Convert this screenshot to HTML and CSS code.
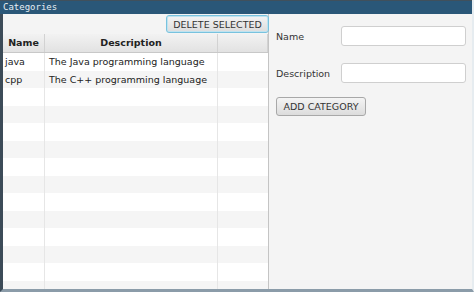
FILE: index.html
```html
<!DOCTYPE html>
<html>
<head>
<meta charset="utf-8">
<link rel="stylesheet" href="styles.css">
</head>
<body>
<div class="window">
  <div class="titlebar">Categories</div>
  <div class="content">
    <div class="left">
      <div class="toolbar">
        <button class="btn btn-focus">DELETE SELECTED</button>
      </div>
      <div class="table">
        <div class="row head">
          <div class="c c1">Name</div>
          <div class="c c2">Description</div>
          <div class="c c3"></div>
        </div>
        <div class="row"><div class="c c1">java</div><div class="c c2 l">The Java programming language</div><div class="c c3"></div></div>
        <div class="row odd"><div class="c c1">cpp</div><div class="c c2 l">The C++ programming language</div><div class="c c3"></div></div>
        <div class="row"><div class="c c1"></div><div class="c c2"></div><div class="c c3"></div></div>
        <div class="row odd"><div class="c c1"></div><div class="c c2"></div><div class="c c3"></div></div>
        <div class="row"><div class="c c1"></div><div class="c c2"></div><div class="c c3"></div></div>
        <div class="row odd"><div class="c c1"></div><div class="c c2"></div><div class="c c3"></div></div>
        <div class="row"><div class="c c1"></div><div class="c c2"></div><div class="c c3"></div></div>
        <div class="row odd"><div class="c c1"></div><div class="c c2"></div><div class="c c3"></div></div>
        <div class="row"><div class="c c1"></div><div class="c c2"></div><div class="c c3"></div></div>
        <div class="row odd"><div class="c c1"></div><div class="c c2"></div><div class="c c3"></div></div>
        <div class="row"><div class="c c1"></div><div class="c c2"></div><div class="c c3"></div></div>
        <div class="row odd"><div class="c c1"></div><div class="c c2"></div><div class="c c3"></div></div>
        <div class="row"><div class="c c1"></div><div class="c c2"></div><div class="c c3"></div></div>
        <div class="row odd"><div class="c c1"></div><div class="c c2"></div><div class="c c3"></div></div>
      </div>
    </div>
    <div class="right">
      <div class="field">
        <label class="lbl">Name</label>
        <div class="input"></div>
      </div>
      <div class="field">
        <label class="lbl">Description</label>
        <div class="input"></div>
      </div>
      <button class="btn add">ADD CATEGORY</button>
    </div>
  </div>
</div>
</body>
</html>
```
FILE: styles.css
```css
html, body {
  margin: 0;
  padding: 0;
  width: 474px;
  height: 292px;
  overflow: hidden;
  background: #f4f4f4;
}
.window {
  width: 474px;
  height: 292px;
  display: flex;
  flex-direction: column;
  box-sizing: border-box;
  border-left: 3px solid #3c4b58;
  border-right: 2px solid #e6ecf0;
  border-bottom: 3px solid #8b9ca9;
  font-family: "DejaVu Sans", sans-serif;
}
.titlebar {
  height: 14px;
  flex: none;
  box-sizing: border-box;
  background: #2a5778;
  border-top: 1px solid #40505c;
  color: #e8eef4;
  font-family: "DejaVu Sans Mono", monospace;
  font-size: 9px;
  line-height: 12px;
  margin-left: -3px;
  padding-left: 3px;
}
.content {
  flex: 1;
  display: flex;
  min-height: 0;
}
.left {
  width: 265px;
  flex: none;
  display: flex;
  flex-direction: column;
  border-right: 1px solid #c4c4c4;
  background: #f4f4f4;
}
.toolbar {
  height: 20px;
  flex: none;
  display: flex;
  justify-content: flex-end;
  align-items: flex-start;
  padding-top: 1px;
  box-sizing: border-box;
}
.btn {
  font-family: "DejaVu Sans", sans-serif;
  font-size: 9.5px;
  color: #333;
  background: linear-gradient(#f4f4f4, #dcdcdc);
  border: 1px solid #a8a8a8;
  border-radius: 3px;
  padding: 0 6px;
  height: 19px;
  line-height: 17px;
  margin: 0;
}
.btn-focus {
  width: 103px;
  height: 18px;
  border: 1px solid #78c2de;
  box-shadow: inset 0 0 0 1px #bfe3f0;
  margin-right: -1px;
  padding: 0;
}
.table {
  flex: 1;
  background: #fff;
  overflow: hidden;
}
.row {
  display: flex;
  height: 17.5px;
  background: #fff;
}
.row.odd {
  background: #f5f5f5;
}
.row.head {
  height: 19px;
  background: linear-gradient(#f2f2f2, #e2e2e2);
  border-bottom: 1px solid #c8c8c8;
  box-sizing: border-box;
  font-weight: bold;
  color: #222;
}
.c {
  box-sizing: border-box;
  font-size: 9.5px;
  color: #222;
  line-height: 17px;
  white-space: nowrap;
  overflow: hidden;
  border-right: 1px solid #e6e6e6;
}
.head .c {
  text-align: center;
  border-right: 1px solid #d2d2d2;
  line-height: 18px;
}
.c1 {
  width: 42px;
  padding-left: 2px;
}
.head .c1 {
  text-align: center;
  padding-left: 0;
}
.c2 {
  width: 173px;
}
.c2.l {
  padding-left: 4px;
}
.c3 {
  width: 50px;
  border-right: none;
}
.right {
  flex: 1;
  display: flex;
  flex-direction: column;
  align-items: flex-start;
  padding: 12px 6px 0 7px;
  gap: 17px;
}
.field {
  display: flex;
  align-items: center;
  width: 100%;
  justify-content: space-between;
}
.lbl {
  font-size: 9.5px;
  color: #333;
}
.input {
  width: 125px;
  height: 20px;
  background: #fff;
  border: 1px solid #cfcfcf;
  border-radius: 3px;
  box-sizing: border-box;
}
.add {
  margin-top: -3px;
  width: 90px;
  padding: 0;
}
```
